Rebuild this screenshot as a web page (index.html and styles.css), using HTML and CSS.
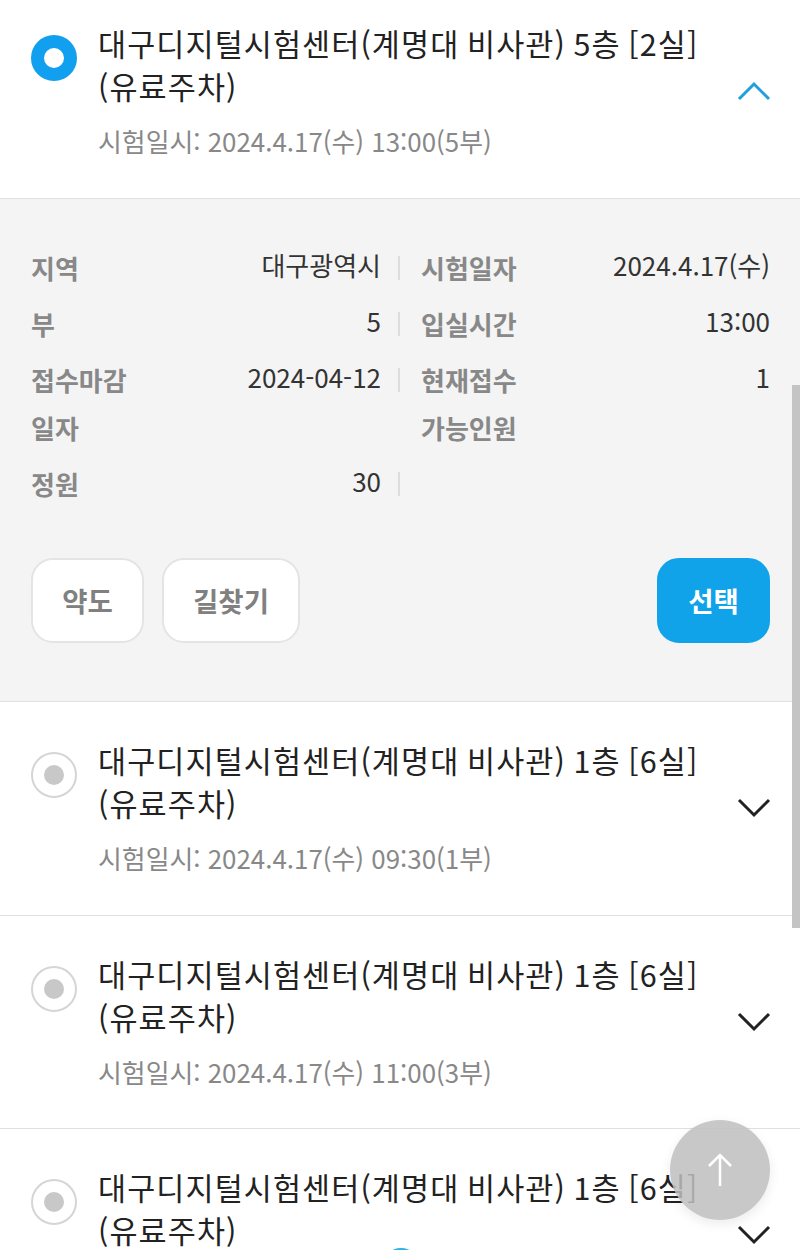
FILE: index.html
```html
<!DOCTYPE html>
<html lang="ko">
<head>
<meta charset="utf-8">
<title>시험장 선택</title>
<link rel="stylesheet" href="styles.css">
</head>
<body>
<main class="list">
  <section class="item item-open">
    <span class="radio radio-on"></span>
    <div class="item-text">
      <h2 class="title">대구디지털시험센터(계명대 비사관) 5층 [2실] (유료주차)</h2>
      <p class="meta">시험일시: 2024.4.17(수) 13:00(5부)</p>
    </div>
    <svg class="chevron chevron-on" viewBox="0 0 34 20"><path d="M2 18 17 3l15 15"/></svg>
  </section>
  <section class="panel">
    <dl class="details">
      <div class="cell"><dt>지역</dt><dd>대구광역시</dd></div>
      <div class="cell cell-right"><dt>시험일자</dt><dd>2024.4.17(수)</dd></div>
      <div class="cell"><dt>부</dt><dd>5</dd></div>
      <div class="cell cell-right"><dt>입실시간</dt><dd>13:00</dd></div>
      <div class="cell"><dt>접수마감<br>일자</dt><dd>2024-04-12</dd></div>
      <div class="cell cell-right"><dt>현재접수<br>가능인원</dt><dd>1</dd></div>
      <div class="cell"><dt>정원</dt><dd>30</dd></div>
    </dl>
    <div class="actions">
      <button class="btn btn-map">약도</button>
      <button class="btn btn-route">길찾기</button>
      <button class="btn btn-select">선택</button>
    </div>
  </section>
  <section class="item">
    <span class="radio"></span>
    <div class="item-text">
      <h2 class="title">대구디지털시험센터(계명대 비사관) 1층 [6실] (유료주차)</h2>
      <p class="meta">시험일시: 2024.4.17(수) 09:30(1부)</p>
    </div>
    <svg class="chevron" viewBox="0 0 34 20"><path d="M2 2l15 15L32 2"/></svg>
  </section>
  <section class="item">
    <span class="radio"></span>
    <div class="item-text">
      <h2 class="title">대구디지털시험센터(계명대 비사관) 1층 [6실] (유료주차)</h2>
      <p class="meta">시험일시: 2024.4.17(수) 11:00(3부)</p>
    </div>
    <svg class="chevron" viewBox="0 0 34 20"><path d="M2 2l15 15L32 2"/></svg>
  </section>
  <section class="item">
    <span class="radio"></span>
    <div class="item-text">
      <h2 class="title">대구디지털시험센터(계명대 비사관) 1층 [6실] (유료주차)</h2>
    </div>
    <svg class="chevron" viewBox="0 0 34 20"><path d="M2 2l15 15L32 2"/></svg>
  </section>
</main>
<div class="scrollbar"></div>
<button class="to-top" aria-label="위로">
  <svg viewBox="0 0 26 34"><path d="M13 33V2M2 13 13 2l11 11"/></svg>
</button>
<div class="sliver"></div>
</body>
</html>
```
FILE: styles.css
```css
* { box-sizing: border-box; }
html, body { margin: 0; height: 100%; }
body {
  position: relative;
  height: 1250px;
  overflow: hidden;
  background: #fff;
  font-family: "Noto Sans CJK KR", "Noto Sans", sans-serif;
  color: #222;
}
.list { margin-top: -15px; }
.item {
  display: flex;
  align-items: center;
  height: 213.5px;
  padding: 0 29px 0 31px;
  border-bottom: 1px solid #e0e0e0;
}
.radio {
  flex: none;
  align-self: flex-start;
  position: relative;
  width: 46px;
  height: 46px;
  margin-top: 50px;
  margin-right: 21px;
  border: 2px solid #d5d5d5;
  border-radius: 50%;
  background: #fff;
}
.radio::after {
  content: "";
  position: absolute;
  left: 11px;
  top: 11px;
  width: 20px;
  height: 20px;
  border-radius: 50%;
  background: #c8c8c8;
}
.radio-on { border: 13px solid #119ff0; }
.radio-on::after { display: none; }
.item-text { flex: 1; align-self: flex-start; padding-top: 37px; min-width: 0; }
.title {
  margin: 0;
  font-size: 30.5px;
  font-weight: 400;
  line-height: 43px;
  letter-spacing: 1.1px;
  word-spacing: -2px;
  word-break: keep-all;
  color: #222;
}
.meta {
  margin: 12px 0 0;
  font-size: 25.9px;
  line-height: 42px;
  color: #888;
}
.chevron { flex: none; width: 34px; height: 20px; fill: none; stroke: #222; stroke-width: 3; }
.chevron-on { stroke: #1f9fdc; }
.panel {
  height: 503.5px;
  padding: 45px 30px 0 31px;
  background: #f4f4f4;
  border-bottom: 1px solid #e0e0e0;
}
.details {
  display: grid;
  grid-template-columns: 369px 1fr;
  row-gap: 8px;
  margin: 0;
}
.cell { display: flex; justify-content: space-between; position: relative; }
.cell:not(.cell-right) { padding-right: 19px; }
.cell:not(.cell-right)::after {
  content: "";
  position: absolute;
  right: 0;
  top: 12px;
  width: 2px;
  height: 24px;
  background: #ddd;
}
.cell-right { padding-left: 21px; }
.cell dt { font-size: 26px; font-weight: 700; line-height: 48px; color: #888; white-space: nowrap; }
.cell dd { margin: 0; font-size: 26px; line-height: 42px; color: #333; white-space: nowrap; }
.actions { display: flex; gap: 18px; margin-top: 50px; }
.btn {
  height: 85px;
  border: 2px solid #e4e4e4;
  border-radius: 22px;
  background: #fff;
  font: 700 27.5px "Noto Sans CJK KR", sans-serif;
  color: #808080;
}
.btn-map { width: 113px; }
.btn-route { width: 138px; }
.btn-select {
  width: 113px;
  margin-left: auto;
  background: #10a3ea;
  border-color: #10a3ea;
  color: #fff;
}
.scrollbar {
  position: absolute;
  right: 0;
  top: 385px;
  width: 8px;
  height: 543px;
  background: #c4c4c4;
}
.to-top {
  position: absolute;
  left: 670px;
  top: 1120px;
  width: 100px;
  height: 100px;
  padding: 0;
  border: 0;
  border-radius: 50%;
  background: rgba(190, 190, 190, 0.85);
  box-shadow: 0 4px 12px rgba(0, 0, 0, 0.08);
  display: flex;
  align-items: center;
  justify-content: center;
}
.to-top svg { width: 26px; height: 34px; fill: none; stroke: #fff; stroke-width: 2.5; }
.sliver {
  position: absolute;
  left: 382px;
  top: 1248px;
  width: 38px;
  height: 38px;
  border-radius: 50%;
  background: #2fb0e8;
}
```
